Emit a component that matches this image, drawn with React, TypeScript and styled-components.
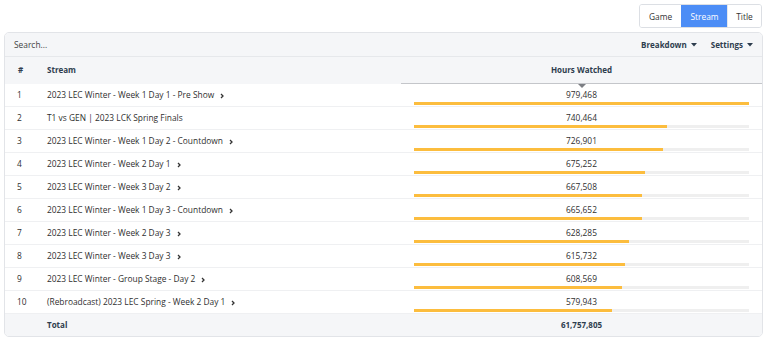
import React from "react";
import styled, { createGlobalStyle } from "styled-components";

const Global = createGlobalStyle`
  html, body { margin: 0; padding: 0; background: #fff; }
  body { font-family: "Open Sans", "Noto Sans", sans-serif; color: #333; }
  * { box-sizing: border-box; }
`;

const Page = styled.div`
  width: 767px;
  height: 341px;
  padding: 4px 4px 0 4px;
  display: flex;
  flex-direction: column;
`;

const TopBar = styled.div`
  display: flex;
  justify-content: flex-end;
  padding-right: 1px;
  height: 24px;
  margin-bottom: 4px;
`;

const Segmented = styled.div`
  display: flex;
  border: 1px solid #dcdfe4;
  border-radius: 3px;
  overflow: hidden;
`;

const SegButton = styled.button<{ $active?: boolean; $w: number }>`
  width: ${(p) => p.$w}px;
  border: none;
  border-left: 1px solid ${(p) => (p.$active ? "#4c8df6" : "#e6e8ec")};
  &:first-child { border-left: none; }
  background: ${(p) => (p.$active ? "#4c8df6" : "#fff")};
  color: ${(p) => (p.$active ? "#fff" : "#333")};
  font-family: inherit;
  font-size: 8.4px;
  padding: 0;
  cursor: pointer;
`;

const Card = styled.div`
  width: 759px;
  border: 1px solid #e2e4e8;
  border-radius: 5px;
  overflow: hidden;
  background: #fff;
`;

const SearchRow = styled.div`
  height: 24px;
  background: #f5f6f8;
  border-bottom: 1px solid #e6e8eb;
  display: flex;
  align-items: center;
  padding: 0 9px 0 9px;
`;

const SearchInput = styled.div`
  flex: 1;
  font-size: 8.4px;
  color: #444;
`;

const Menu = styled.div`
  display: flex;
  align-items: center;
  gap: 4px;
  font-size: 8px;
  font-weight: 700;
  color: #2e3d4e;
  margin-left: 14px;
`;

const Caret = () => (
  <svg width="6" height="4" viewBox="0 0 6 4">
    <path d="M0 0 L6 0 L3 3.5 Z" fill="#2e3d4e" />
  </svg>
);

const Table = styled.table`
  width: 100%;
  border-collapse: collapse;
  table-layout: fixed;
`;

const Th = styled.th<{ $align?: string; $w?: number; $sorted?: boolean; $pl?: number }>`
  ${(p) => (p.$w ? `width: ${p.$w}px;` : "")}
  height: 26px;
  background: #f5f6f8;
  font-size: 8px;
  font-weight: 700;
  color: #2e3d4e;
  text-align: ${(p) => p.$align || "left"};
  padding: 0 0 0 ${(p) => p.$pl ?? 0}px;
  border-bottom: 1px solid ${(p) => (p.$sorted ? "#c4c6ca" : "#f5f6f8")};
  position: relative;
`;

const SortMark = styled.span`
  position: absolute;
  left: 50%;
  bottom: -5px;
  transform: translateX(-50%);
  width: 0;
  height: 0;
  border-left: 4px solid transparent;
  border-right: 4px solid transparent;
  border-top: 4px solid #7c7f84;
`;

const Tr = styled.tr`
  border-bottom: 1px solid #eff0f2;
`;

const Td = styled.td<{ $pl?: number }>`
  height: 23px;
  padding: 0 0 0 ${(p) => p.$pl ?? 0}px;
  font-size: 8.4px;
  color: #2f2f2f;
  vertical-align: middle;
  white-space: nowrap;
`;

const ValueCell = styled.td`
  height: 23px;
  padding: 0 13px 1px;
  vertical-align: bottom;
  font-size: 8.4px;
  color: #2f2f2f;
  text-align: center;
`;

const Value = styled.div`
  line-height: 12px;
  margin-bottom: 1px;
`;

const Track = styled.div`
  height: 3px;
  background: #efefef;
`;

const Fill = styled.div`
  height: 3px;
  background: #fcbd3e;
`;

const ChevronIcon = styled.svg`
  margin-left: 5px;
  vertical-align: -0.5px;
`;

const Chevron = () => (
  <ChevronIcon width="6" height="6" viewBox="0 0 6 6">
    <path d="M2 1 L4 3 L2 5" fill="none" stroke="#333" strokeWidth="1.3" />
  </ChevronIcon>
);

const TotalRow = styled.tr`
  background: #f5f6f8;
`;

const TotalTd = styled.td<{ $align?: string; $pl?: number }>`
  height: 23px;
  padding: 0 0 0 ${(p) => p.$pl ?? 0}px;
  font-size: 8px;
  font-weight: 700;
  color: #2e3d4e;
  text-align: ${(p) => p.$align || "left"};
`;

const rows: [string, number, boolean][] = [
  ["2023 LEC Winter - Week 1 Day 1 - Pre Show", 979468, true],
  ["T1 vs GEN | 2023 LCK Spring Finals", 740464, false],
  ["2023 LEC Winter - Week 1 Day 2 - Countdown", 726901, true],
  ["2023 LEC Winter - Week 2 Day 1", 675252, true],
  ["2023 LEC Winter - Week 3 Day 2", 667508, true],
  ["2023 LEC Winter - Week 1 Day 3 - Countdown", 665652, true],
  ["2023 LEC Winter - Week 2 Day 3", 628285, true],
  ["2023 LEC Winter - Week 3 Day 3", 615732, true],
  ["2023 LEC Winter - Group Stage - Day 2", 608569, true],
  ["(Rebroadcast) 2023 LEC Spring - Week 2 Day 1", 579943, true],
];

const max = 979468;

export default function App() {
  return (
    <>
      <Global />
      <Page>
        <TopBar>
          <Segmented>
            <SegButton $w={41}>Game</SegButton>
            <SegButton $w={46} $active>Stream</SegButton>
            <SegButton $w={34}>Title</SegButton>
          </Segmented>
        </TopBar>
        <Card>
          <SearchRow>
            <SearchInput>Search...</SearchInput>
            <Menu>Breakdown <Caret /></Menu>
            <Menu>Settings <Caret /></Menu>
          </SearchRow>
          <Table>
            <thead>
              <tr>
                <Th $w={42} $pl={13}>#</Th>
                <Th $w={354}>Stream</Th>
                <Th $align="center" $sorted>
                  Hours Watched
                  <SortMark />
                </Th>
              </tr>
            </thead>
            <tbody>
              {rows.map(([name, v, chev], i) => (
                <Tr key={i}>
                  <Td $pl={12}>{i + 1}</Td>
                  <Td>
                    {name}
                    {chev && <Chevron />}
                  </Td>
                  <ValueCell>
                    <Value>{v.toLocaleString("en-US")}</Value>
                    <Track>
                      <Fill style={{ width: `${(v / max) * 100}%` }} />
                    </Track>
                  </ValueCell>
                </Tr>
              ))}
              <TotalRow>
                <TotalTd />
                <TotalTd>Total</TotalTd>
                <TotalTd $align="center">61,757,805</TotalTd>
              </TotalRow>
            </tbody>
          </Table>
        </Card>
      </Page>
    </>
  );
}
